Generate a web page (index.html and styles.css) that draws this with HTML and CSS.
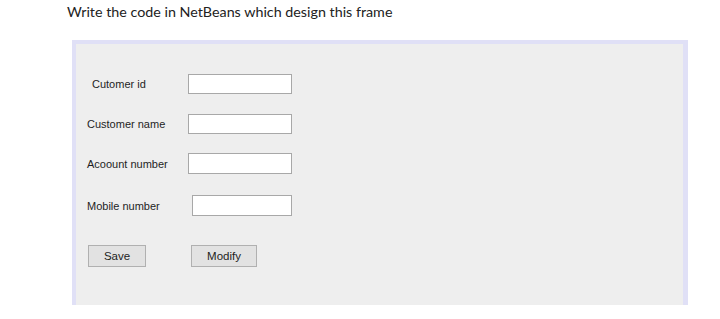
FILE: index.html
```html
<!DOCTYPE html>
<html lang="en">
<head>
    <meta charset="UTF-8">
    <title>Customer frame</title>
    <link rel="stylesheet" href="styles.css">
</head>
<body>
    <p class="question">Write the code in NetBeans which design this frame</p>

    <div class="frame">
        <div class="row row-first">
            <label class="label label-shift">Cutomer id</label>
            <input type="text" class="field">
        </div>
        <div class="row row-second">
            <label class="label">Customer name</label>
            <input type="text" class="field">
        </div>
        <div class="row row-third">
            <label class="label">Acoount number</label>
            <input type="text" class="field">
        </div>
        <div class="row row-fourth">
            <label class="label">Mobile number</label>
            <input type="text" class="field field-shift">
        </div>
        <div class="buttons">
            <button class="btn btn-save">Save</button>
            <button class="btn btn-modify">Modify</button>
        </div>
    </div>
</body>
</html>
```

FILE: styles.css
```css
* {
    box-sizing: border-box;
    margin: 0;
    padding: 0;
}

body {
    background: #ffffff;
    font-family: 'Liberation Sans', Arial, sans-serif;
}

.question {
    font-family: Lato, 'Open Sans', sans-serif;
    font-size: 14.3px;
    color: #222222;
    padding: 3px 0 0 67px;
    height: 40px;
}

.frame {
    margin-left: 72px;
    width: 616px;
    height: 265px;
    background: #eeeeee;
    border-top: 4px solid #e0e0f6;
    border-left: 4px solid #e0e0f6;
    border-right: 5px solid #e0e0f6;
    padding-left: 11px;
}

.row {
    display: flex;
    align-items: center;
    height: 20px;
}

.row-first { margin-top: 30px; }
.row-second { margin-top: 20px; }
.row-third { margin-top: 19px; height: 21px; }
.row-fourth { margin-top: 21px; height: 21px; }

.label {
    width: 101px;
    font-size: 11px;
    color: #1e1e1e;
}

.label-shift {
    padding-left: 5px;
}

.field {
    width: 104px;
    height: 100%;
    background: #ffffff;
    border: 1px solid #a8a8a8;
    outline: none;
}

.field-shift {
    margin-left: 4px;
    width: 100px;
}

.buttons {
    display: flex;
    margin-top: 29px;
    padding-left: 1px;
}

.btn {
    height: 22px;
    background: #e2e2e2;
    border: 1px solid #b0b0b0;
    font-family: 'Liberation Sans', Arial, sans-serif;
    font-size: 11.5px;
    color: #1e1e1e;
}

.btn-save {
    width: 58px;
}

.btn-modify {
    width: 66px;
    margin-left: 45px;
}
```
